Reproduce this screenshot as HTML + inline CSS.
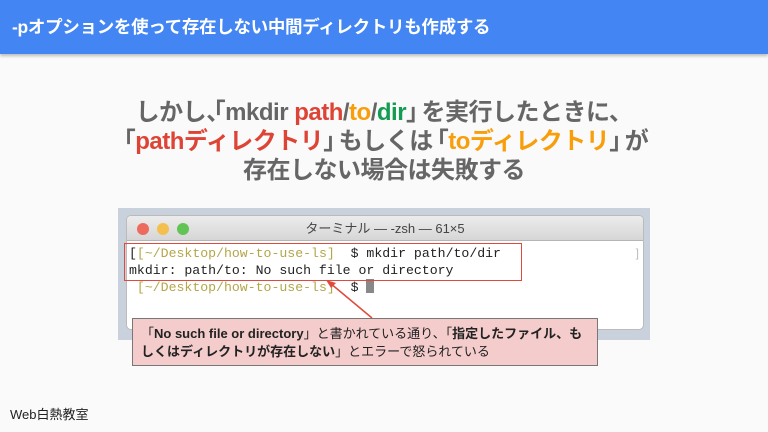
<!DOCTYPE html>
<html><head><meta charset="utf-8"><style>
*{margin:0;padding:0;box-sizing:border-box}
body{width:768px;height:432px;background:#fafafa;font-family:"Liberation Sans","Noto Sans CJK JP",sans-serif;position:relative;overflow:hidden}
.hd{position:absolute;left:0;top:0;width:768px;height:54px;background:#4385f3;box-shadow:0 2px 3px rgba(0,0,0,.25)}
.hd span{position:absolute;left:12px;top:14px;color:#fff;font-size:17.5px;font-weight:bold;letter-spacing:-0.3px}
.main{position:absolute;left:0;width:768px;text-align:center;color:#666;font-size:24px;font-weight:bold;line-height:29px;top:98px;letter-spacing:-0.5px}
.b1{margin-right:-8px}.b2{margin-left:-8px}
.r{color:#de4435}.o{color:#f99e0b}.g{color:#149c53}
.tb{position:absolute;left:118px;top:208px;width:532px;height:132px;background:#c8d1dc}
.win{position:absolute;left:126px;top:215px;width:518px;height:115px;background:#fff;border-radius:5px;overflow:hidden;border:1px solid #bbb}
.tt{height:25px;background:linear-gradient(#ececec,#d6d6d6);border-bottom:1px solid #b5b5b5;text-align:center;font-size:13px;color:#444;line-height:25px}
.d{position:absolute;top:7px;width:12px;height:12px;border-radius:50%}
.term{position:absolute;left:2px;top:30px;font-family:"Liberation Mono",monospace;font-size:13.2px;line-height:16.5px;color:#222;white-space:pre}
.y{color:#b5a64a}
.box{position:absolute;left:124px;top:243px;width:398px;height:38px;border:1.5px solid #e04a3c}
.cur{display:inline-block;width:8px;height:14px;background:#888;vertical-align:-2px}
.call{position:absolute;left:132px;top:318px;width:466px;height:48px;background:#f4cccc;border:1px solid #777;font-size:13px;color:#222;padding:6px 8px;line-height:18px}
.foot{position:absolute;left:10px;top:404px;font-size:13px;color:#222}
</style></head><body>
<div class="hd"><span>-pオプションを使って存在しない中間ディレクトリも作成する</span></div>
<div class="main">しかし<span class="b1">、</span><span class="b2">「</span>mkdir <span class="r">path</span>/<span class="o">to</span>/<span class="g">dir</span><span class="b1">」</span>を実行したときに、<br><span class="b2">「</span><span class="r">pathディレクトリ</span><span class="b1">」</span>もしくは<span class="b2">「</span><span class="o">toディレクトリ</span><span class="b1">」</span>が<br>存在しない場合は失敗する</div>
<div class="tb"></div>
<div class="win">
<div class="tt">ターミナル — -zsh — 61×5</div>
<div class="d" style="left:10px;background:#ed6a5e"></div>
<div class="d" style="left:30px;background:#f5bf4f"></div>
<div class="d" style="left:50px;background:#61c454"></div>
<div class="term">[<span class="y">[~/Desktop/how-to-use-ls]</span>  $ mkdir path/to/dir
mkdir: path/to: No such file or directory
 <span class="y">[~/Desktop/how-to-use-ls]</span>  $ <span class="cur"></span></div>
<div style="position:absolute;right:4px;top:30px;color:#bbb;font-size:12px">]</div>
</div>
<div class="box"></div>
<svg style="position:absolute;left:0;top:0" width="768" height="432"><line x1="372" y1="318" x2="330" y2="283" stroke="#e04a3c" stroke-width="1.5"/><polygon points="326,280 336,283 331,288" fill="#e04a3c"/></svg>
<div class="call">「<b>No such file or directory</b>」と書かれている通り、「<b>指定したファイル、も<br>しくはディレクトリが存在しない</b>」とエラーで怒られている</div>
<div class="foot">Web白熱教室</div>
</body></html>
